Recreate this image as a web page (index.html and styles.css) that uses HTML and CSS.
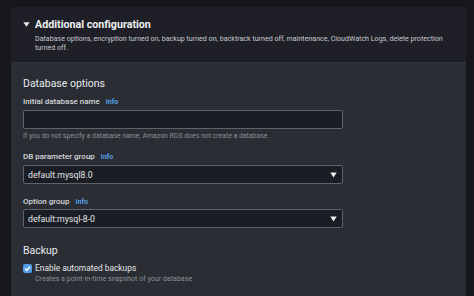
FILE: index.html
```html
<!DOCTYPE html>
<html>
<head>
<meta charset="utf-8">
<link rel="stylesheet" href="styles.css">
</head>
<body>
<div class="card">
  <div class="card-header">
    <svg class="caret" width="7" height="7" viewBox="0 0 7 7"><path d="M0.3 1.2 H6.7 L3.5 5.8 Z" fill="#e9ebed"/></svg>
    <div class="header-text">
      <h2 class="title">Additional configuration</h2>
      <p class="summary">Database options, encryption turned on, backup turned on, backtrack turned off, maintenance, CloudWatch Logs, delete protection turned off.</p>
    </div>
  </div>
  <div class="card-body">
    <h3 class="section-title">Database options</h3>
    <div class="label first">Initial database name <span class="info">Info</span></div>
    <div class="input"></div>
    <div class="hint">If you do not specify a database name, Amazon RDS does not create a database.</div>
    <div class="label after-hint">DB parameter group <span class="info">Info</span></div>
    <div class="input select"><span>default.mysql8.0</span><svg width="7" height="6" viewBox="0 0 7 6"><path d="M0.3 0.6 H6.7 L3.5 5.4 Z" fill="#eef0f2"/></svg></div>
    <div class="label after-select">Option group <span class="info">Info</span></div>
    <div class="input select tight"><span>default:mysql-8-0</span><svg width="7" height="6" viewBox="0 0 7 6"><path d="M0.3 0.6 H6.7 L3.5 5.4 Z" fill="#eef0f2"/></svg></div>
    <h3 class="section-title backup">Backup</h3>
    <div class="check-row">
      <div class="checkbox"><svg width="9" height="9" viewBox="0 0 9 9"><path d="M2 4.6 L3.8 6.4 L7 2.6" fill="none" stroke="#ffffff" stroke-width="1.4"/></svg></div>
      <div>
        <div class="check-label">Enable automated backups</div>
        <div class="check-desc">Creates a point-in-time snapshot of your database</div>
      </div>
    </div>
  </div>
</div>
</body>
</html>
```

FILE: styles.css
```css
html, body {
  margin: 0;
  padding: 0;
  background: #16171c;
  font-family: Roboto, "Open Sans", sans-serif;
  color: #d1d5db;
  height: 100%;
  overflow: hidden;
}
body {
  padding: 7px 8px 0 11px;
  box-sizing: border-box;
}
.card {
  width: 455px;
  height: 100%;
  display: flex;
  flex-direction: column;
  background: #2a2d33;
  border-radius: 3px 3px 0 0;
}
.card-header {
  background: #1f2027;
  display: flex;
  align-items: flex-start;
  padding: 10px 12px 0 12px;
  height: 56px;
  flex: none;
  box-sizing: border-box;
  border-bottom: 1px solid #34373e;
  border-radius: 3px 3px 0 0;
}
.caret {
  margin-top: 4px;
  margin-right: 5px;
  flex: none;
}
.title {
  margin: 0;
  font-size: 10.7px;
  font-weight: 700;
  line-height: 15px;
  color: #eef0f2;
}
.summary {
  margin: 1.5px 0 0 0;
  font-size: 7.1px;
  line-height: 9px;
  color: #c6c9ce;
}
.card-body {
  padding: 14px 12px 0 12px;
}
.section-title {
  margin: 0;
  font-size: 10.5px;
  font-weight: 400;
  line-height: 13px;
  color: #e8eaed;
}
.label {
  font-size: 8px;
  line-height: 10px;
  color: #d5d8dc;
  font-weight: 500;
}
.label.first {
  margin-top: 7px;
}
.label.after-hint {
  margin-top: 11px;
}
.label.after-select {
  margin-top: 13px;
}
.info {
  color: #539fe5;
  font-weight: 700;
  font-size: 7px;
  margin-left: 4px;
}
.input {
  margin-top: 3px;
  width: 320px;
  height: 19px;
  box-sizing: border-box;
  border: 1.5px solid #5f6269;
  background: #1b1d24;
  border-radius: 2px;
}
.input.tight {
  margin-top: 2px;
}
.select {
  display: flex;
  align-items: center;
  justify-content: space-between;
  padding: 0 5px 0 4px;
  font-size: 8.7px;
  color: #e3e5e8;
}
.hint {
  margin-top: 3px;
  font-size: 6.9px;
  line-height: 9px;
  color: #8d9096;
}
.backup {
  margin-top: 16px;
}
.check-row {
  display: flex;
  align-items: flex-start;
  margin-top: 6px;
}
.checkbox {
  width: 9px;
  height: 9px;
  background: #539fe5;
  border-radius: 2px;
  margin-top: 1px;
  margin-right: 3px;
  display: flex;
  flex: none;
}
.check-label {
  font-size: 8.4px;
  line-height: 10px;
  color: #e3e5e8;
}
.check-desc {
  margin-top: 1px;
  font-size: 7.1px;
  line-height: 10px;
  color: #8d9096;
}
```
